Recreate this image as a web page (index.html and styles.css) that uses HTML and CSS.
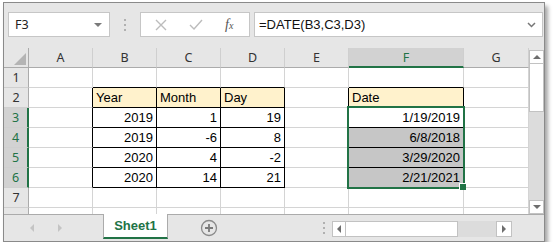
FILE: index.html
```html
<!DOCTYPE html>
<html lang="en">
<head>
  <meta charset="UTF-8" />
  <title>Sheet1</title>
  <link rel="stylesheet" href="styles.css">
</head>
<body>
  <div class="window">
    <div class="formula-bar">
      <div class="name-box">
        <span>F3</span>
        <span class="caret"></span>
      </div>
      <div class="grip"><i></i><i></i><i></i></div>
      <div class="fx-box">
        <svg class="cancel" width="12" height="12" viewBox="0 0 12 12"><path d="M1 1 L11 11 M11 1 L1 11" /></svg>
        <svg class="enter" width="14" height="11" viewBox="0 0 14 11"><path d="M1 6 L5 10 L13 1" /></svg>
        <span class="fx">f<sub>x</sub></span>
      </div>
      <div class="formula">
        <span>=DATE(B3,C3,D3)</span>
        <svg class="chevron" width="9" height="6" viewBox="0 0 9 6"><path d="M1 1 L4.5 4.5 L8 1" /></svg>
      </div>
    </div>

    <div class="sheet-area">
      <div class="sheet">
        <!-- header -->
        <div class="corner"></div>
        <div class="hd">A</div>
        <div class="hd">B</div>
        <div class="hd">C</div>
        <div class="hd">D</div>
        <div class="hd">E</div>
        <div class="hd active">F</div>
        <div class="hd">G</div>
        <!-- row 1 -->
        <div class="rh">1</div>
        <div class="c"></div>
        <div class="c b-bot"></div>
        <div class="c b-bot"></div>
        <div class="c b-bot"></div>
        <div class="c"></div>
        <div class="c b-bot"></div>
        <div class="c"></div>
        <!-- row 2 -->
        <div class="rh">2</div>
        <div class="c b-right"></div>
        <div class="c tb th">Year</div>
        <div class="c tb th">Month</div>
        <div class="c tb th">Day</div>
        <div class="c b-right"></div>
        <div class="c tb th">Date</div>
        <div class="c"></div>
        <!-- row 3 -->
        <div class="rh active">3</div>
        <div class="c b-right"></div>
        <div class="c tb num">2019</div>
        <div class="c tb num">1</div>
        <div class="c tb num">19</div>
        <div class="c b-right"></div>
        <div class="c tb num">1/19/2019</div>
        <div class="c"></div>
        <!-- row 4 -->
        <div class="rh active">4</div>
        <div class="c b-right"></div>
        <div class="c tb num">2019</div>
        <div class="c tb num">-6</div>
        <div class="c tb num">8</div>
        <div class="c b-right"></div>
        <div class="c tb num sel">6/8/2018</div>
        <div class="c"></div>
        <!-- row 5 -->
        <div class="rh active">5</div>
        <div class="c b-right"></div>
        <div class="c tb num">2020</div>
        <div class="c tb num">4</div>
        <div class="c tb num">-2</div>
        <div class="c b-right"></div>
        <div class="c tb num sel">3/29/2020</div>
        <div class="c"></div>
        <!-- row 6 -->
        <div class="rh active">6</div>
        <div class="c b-right"></div>
        <div class="c tb num">2020</div>
        <div class="c tb num">14</div>
        <div class="c tb num">21</div>
        <div class="c b-right"></div>
        <div class="c tb num sel">2/21/2021</div>
        <div class="c"></div>
        <!-- row 7 -->
        <div class="rh">7</div>
        <div class="c"></div>
        <div class="c"></div>
        <div class="c"></div>
        <div class="c"></div>
        <div class="c"></div>
        <div class="c"></div>
        <div class="c"></div>
        <!-- row 8 (cut off) -->
        <div class="rh part"></div>
        <div class="c part"></div>
        <div class="c part"></div>
        <div class="c part"></div>
        <div class="c part"></div>
        <div class="c part"></div>
        <div class="c part"></div>
        <div class="c part"></div>

        <div class="selection"></div>
        <div class="fill-handle"></div>
      </div>

      <div class="vscroll">
        <div class="sb-btn"><span class="tri up"></span></div>
        <div class="sb-thumb"></div>
        <div class="sb-track"></div>
        <div class="sb-btn"><span class="tri down"></span></div>
      </div>
    </div>

    <div class="tab-bar">
      <div class="tab-nav">
        <span class="tri left light"></span>
        <span class="tri right light"></span>
      </div>
      <div class="tab">Sheet1</div>
      <svg class="add-sheet" width="18" height="18" viewBox="0 0 18 18">
        <circle cx="9" cy="9" r="7.5" />
        <path d="M9 5 V13 M5 9 H13" />
      </svg>
      <div class="grip tab-grip"><i></i><i></i><i></i></div>
      <div class="hscroll">
        <div class="hs-btn"><span class="tri left"></span></div>
        <div class="hs-thumb"></div>
        <div class="hs-track"></div>
        <div class="hs-btn wide"><span class="tri right"></span></div>
      </div>
    </div>
  </div>
</body>
</html>
```

FILE: styles.css
```css
* {
  box-sizing: border-box;
  margin: 0;
  padding: 0;
}

html, body {
  background: #fff;
  font-family: "Liberation Sans", Arial, sans-serif;
  overflow: hidden;
}

.window {
  margin: 2px 0 0 3px;
  width: 542px;
  height: 240px;
  border: 1px solid #8a8a8a;
  background: #e6e6e6;
  box-shadow: 3px 4px 4px rgba(0, 0, 0, 0.35);
  display: flex;
  flex-direction: column;
}

/* formula bar */

.formula-bar {
  height: 45px;
  display: flex;
  align-items: flex-start;
  padding: 9px 1px 0 4px;
}

.name-box {
  width: 102px;
  height: 25px;
  background: #fff;
  border: 1px solid #c6c6c6;
  display: flex;
  align-items: center;
  justify-content: space-between;
  padding: 0 7px 0 6px;
  font-family: "Noto Sans", sans-serif;
  font-size: 12.5px;
  color: #222;
}

.caret {
  width: 0;
  height: 0;
  border-left: 4px solid transparent;
  border-right: 4px solid transparent;
  border-top: 4px solid #7a7a7a;
}

.grip {
  width: 30px;
  height: 25px;
  display: flex;
  flex-direction: column;
  align-items: center;
  justify-content: center;
  gap: 3px;
}

.grip i {
  width: 2px;
  height: 2px;
  background: #b0b0b0;
}

.fx-box {
  width: 110px;
  height: 25px;
  background: #fff;
  border: 1px solid #c6c6c6;
  display: flex;
  align-items: center;
  padding-left: 14px;
}

.cancel path,
.enter path {
  fill: none;
  stroke: #bcbcbc;
  stroke-width: 1.4;
}

.enter {
  margin-left: 22px;
}

.fx {
  margin-left: 22px;
  font-family: "Liberation Serif", serif;
  font-style: italic;
  font-size: 14px;
  color: #555;
}

.fx sub {
  font-size: 10px;
  vertical-align: 0;
}

.formula {
  flex: 1;
  margin-left: 4px;
  height: 25px;
  background: #fff;
  border: 1px solid #c6c6c6;
  display: flex;
  align-items: center;
  justify-content: space-between;
  padding: 0 6px 0 4px;
  font-size: 13px;
  color: #111;
}

.chevron path {
  fill: none;
  stroke: #777;
  stroke-width: 1.5;
}

/* sheet */

.sheet-area {
  height: 166px;
  display: flex;
}

.sheet {
  position: relative;
  width: 525px;
  display: grid;
  grid-template-columns: 25px 64px 64px 64px 64px 64px 115px 65px;
  grid-template-rows: repeat(8, 20px) 6px;
  background: #fff;
}

.corner,
.hd,
.rh {
  background: #e6e6e6;
  font-family: "Noto Sans", sans-serif;
  font-size: 12.5px;
  color: #333;
  text-align: center;
  line-height: 19px;
}

.corner {
  position: relative;
  border-right: 1px solid #ababab;
  border-bottom: 1px solid #ababab;
}

.corner::after {
  content: "";
  position: absolute;
  right: 2px;
  bottom: 2px;
  border-left: 12px solid transparent;
  border-bottom: 12px solid #b4b4b4;
}

.hd {
  border-right: 1px solid #cfcfcf;
  border-bottom: 1px solid #ababab;
}

.hd.active {
  background: #d2d2d2;
  color: #217346;
  border-bottom: 2px solid #217346;
}

.rh {
  border-right: 1px solid #ababab;
  border-bottom: 1px solid #cfcfcf;
}

.rh.active {
  background: #d2d2d2;
  color: #217346;
  border-right: 2px solid #217346;
}

.c {
  border-right: 1px solid #d4d4d4;
  border-bottom: 1px solid #d4d4d4;
  font-size: 13px;
  color: #000;
  line-height: 20px;
  padding: 0 3px;
  white-space: nowrap;
  overflow: hidden;
}

.part,
.rh.part {
  border-bottom: none;
}

.tb {
  border-right-color: #000;
  border-bottom-color: #000;
}

.b-right {
  border-right-color: #000;
}

.b-bot {
  border-bottom-color: #000;
}

.th {
  background: #fff2cc;
}

.num {
  text-align: right;
}

.sel {
  background: #c6c6c6;
}

.selection {
  position: absolute;
  left: 343px;
  top: 58px;
  width: 118px;
  height: 83px;
  border: 2px solid #217346;
  pointer-events: none;
}

.fill-handle {
  position: absolute;
  left: 455px;
  top: 135px;
  width: 7px;
  height: 7px;
  background: #217346;
  border-left: 1px solid #fff;
  border-top: 1px solid #fff;
}

/* scrollbars */

.vscroll {
  width: 15px;
  display: flex;
  flex-direction: column;
  padding-top: 2px;
  background: #e6e6e6;
}

.sb-btn {
  height: 14px;
  background: #fff;
  border: 1px solid #c2c2c2;
  display: flex;
  align-items: center;
  justify-content: center;
}

.sb-thumb {
  height: 48px;
  background: #fff;
  border: 1px solid #c2c2c2;
  border-top: none;
}

.sb-track {
  flex: 1;
  background: #dcdcdc;
}

.tri {
  width: 0;
  height: 0;
}

.tri.up {
  border-left: 4px solid transparent;
  border-right: 4px solid transparent;
  border-bottom: 4px solid #6e6e6e;
}

.tri.down {
  border-left: 4px solid transparent;
  border-right: 4px solid transparent;
  border-top: 4px solid #6e6e6e;
}

.tri.left {
  border-top: 4px solid transparent;
  border-bottom: 4px solid transparent;
  border-right: 4px solid #6e6e6e;
}

.tri.right {
  border-top: 4px solid transparent;
  border-bottom: 4px solid transparent;
  border-left: 4px solid #6e6e6e;
}

.tri.light.left {
  border-right-color: #c4c4c4;
}

.tri.light.right {
  border-left-color: #c4c4c4;
}

/* tabs */

.tab-bar {
  height: 27px;
  border-top: 1px solid #ababab;
  display: flex;
  align-items: flex-start;
}

.tab-nav {
  width: 99px;
  height: 26px;
  display: flex;
  align-items: center;
  gap: 24px;
  padding-left: 26px;
}

.tab {
  width: 65px;
  height: 25px;
  margin-top: -1px;
  background: #fff;
  border-left: 1px solid #ababab;
  border-right: 1px solid #ababab;
  border-bottom: 2px solid #217346;
  color: #217346;
  font-weight: bold;
  font-size: 13px;
  text-align: center;
  line-height: 23px;
}

.add-sheet {
  margin: 4px 0 0 32px;
}

.add-sheet circle {
  fill: none;
  stroke: #8a8a8a;
  stroke-width: 1.3;
}

.add-sheet path {
  stroke: #7a7a7a;
  stroke-width: 1.8;
}

.tab-grip {
  margin-left: 98px;
  width: 16px;
  height: 26px;
}

.hscroll {
  margin-top: 6px;
  width: 180px;
  height: 16px;
  display: flex;
}

.hs-btn {
  width: 14px;
  background: #fff;
  border: 1px solid #c2c2c2;
  display: flex;
  align-items: center;
  justify-content: center;
}

.hs-btn.wide {
  width: 16px;
}

.hs-thumb {
  width: 112px;
  background: #fff;
  border: 1px solid #c2c2c2;
  border-left: none;
}

.hs-track {
  flex: 1;
  background: #dcdcdc;
}
```
